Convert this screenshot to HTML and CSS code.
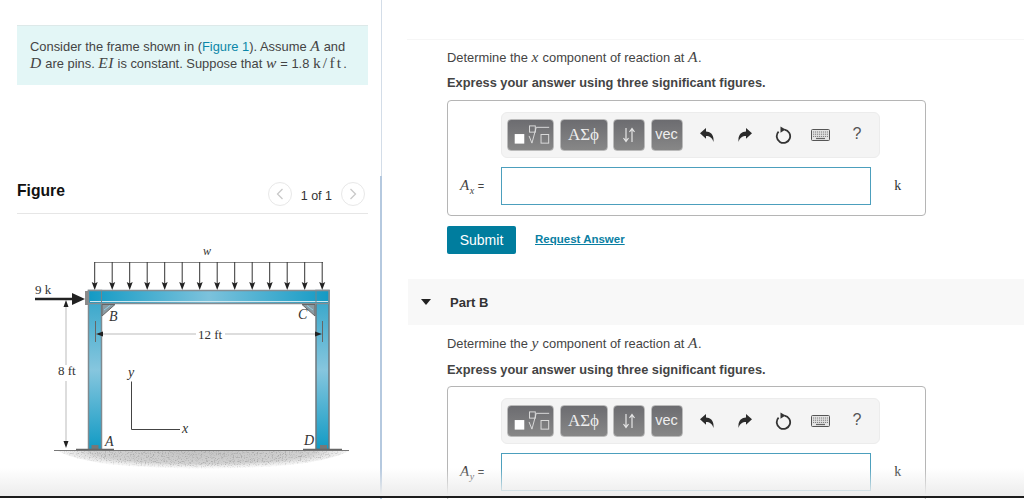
FILE: index.html
```html
<!DOCTYPE html>
<html lang="en">
<head>
<meta charset="utf-8">
<title>Frame reactions</title>
<link rel="stylesheet" href="styles.css">
</head>
<body>
<svg class="defs" width="0" height="0" aria-hidden="true">
  <defs>
    <symbol id="i-undo" viewBox="0 0 14 14"><path d="M0 5.300 6 0V3.400C10.500 3.600 14.400 6.600 13.400 14 12.400 9.800 9.600 8 6 8V10.800Z"/></symbol>
    <symbol id="i-redo" viewBox="0 0 14 14"><path d="M14 5.300 8 0V3.400C3.500 3.600-.4 6.600.6 14 1.600 9.800 4.400 8 8 8V10.800Z"/></symbol>
    <symbol id="i-reset" viewBox="0 0 17 18"><path d="M9.500 3.600A6.700 6.700 0 1 1 3.600 5.600" fill="none" stroke="#333" stroke-width="1.800"/><path d="M5.500 .5 10.500 3.600 5.500 6.800Z" fill="#333"/></symbol>
    <symbol id="i-keys" viewBox="0 0 19 12"><rect x=".5" y=".5" width="18" height="11" rx="1" fill="#e4e4e4" stroke="#555"/><path d="M2 3h15M2 5.200h15M2 7.400h15" stroke="#777" stroke-dasharray="1.200 .8"/><path d="M5 9.500h9" stroke="#666" stroke-width="1.200"/></symbol>
    <symbol id="i-root" viewBox="0 0 47 32"><rect x="7" y="15" width="10" height="10" fill="#fff"/><rect x="22.500" y="6.500" width="6" height="6.500" fill="none" stroke="#ddd"/><path d="M22 17l3 7.500L29.500 8H43" fill="none" stroke="#ddd"/><rect x="34.500" y="15.500" width="8" height="9" fill="none" stroke="#ddd"/></symbol>
    <symbol id="i-updown" viewBox="0 0 14 16"><path d="M4 1v13M1.500 11 4 14.500 6.500 11M10 15V2M7.500 5 10 1.500 12.500 5" fill="none" stroke="#e6e6e6" stroke-width="1.200"/></symbol>
  </defs>
</svg>

<div class="page">
  <aside class="left">
    <div class="intro">Consider the frame shown in (<a class="flink">Figure 1</a>). Assume <i class="m">A</i> and<br><i class="m">D</i> are pins. <i class="m">EI</i> is constant. Suppose that <i class="m">w</i> = 1.8 <span class="mr">k/ft</span>.</div>

    <div class="fig-head">
      <h2 class="fig-title">Figure</h2>
      <div class="pager">
        <span class="circle"><svg width="8" height="12" viewBox="0 0 8 12"><path d="M6.500 1 1.500 6l5 5" fill="none" stroke="#c9c9c9" stroke-width="1.300"/></svg></span>
        <span class="count">1 of 1</span>
        <span class="circle"><svg width="8" height="12" viewBox="0 0 8 12"><path d="M1.500 1l5 5-5 5" fill="none" stroke="#c9c9c9" stroke-width="1.300"/></svg></span>
      </div>
    </div>

    <svg class="frame" width="381" height="259" viewBox="0 240 381 259" role="img" aria-label="Frame diagram">
      <defs>
        <linearGradient id="gh" x1="0" x2="1" y1="0" y2="0"><stop offset="0" stop-color="#139ac4"/><stop offset=".5" stop-color="#7cc2dc"/><stop offset="1" stop-color="#139ac4"/></linearGradient>
        <linearGradient id="gv" x1="0" x2="0" y1="0" y2="1"><stop offset="0" stop-color="#2fa3c8"/><stop offset=".5" stop-color="#86c6de"/><stop offset="1" stop-color="#109ac4"/></linearGradient>
        <radialGradient id="gs" cx=".5" cy="0" r="1" gradientTransform="translate(.5 0) scale(.55 1) translate(-.5 0)"><stop offset="0" stop-color="#c4c4c4"/><stop offset=".7" stop-color="#d2d2d2"/><stop offset="1" stop-color="#e8e8e8" stop-opacity="0"/></radialGradient>
        <filter id="speck" x="0" y="0" width="100%" height="100%">
          <feTurbulence type="fractalNoise" baseFrequency=".75" numOctaves="2" seed="4" result="n"/>
          <feColorMatrix in="n" type="matrix" values="0 0 0 0 .4  0 0 0 0 .4  0 0 0 0 .4  3.500 0 0 0 -1.700" result="d"/>
          <feComposite in="d" in2="SourceGraphic" operator="in" result="c"/>
          <feMerge><feMergeNode in="SourceGraphic"/><feMergeNode in="c"/></feMerge>
        </filter>
      </defs>
      <path d="M58 451H349C330 461 285 469 205 469 125 469 78 462 58 451Z" fill="url(#gs)" filter="url(#speck)"/>
      <path d="M54 450.500H349" stroke="#777"/>

      <path d="M94.500 262.500H323" stroke="#888"/>
      <path d="M94.700 262V284M112.200 262V284M129.700 262V284M147.200 262V284M164.700 262V284M182.200 262V284M199.700 262V284M217.200 262V284M234.700 262V284M252.200 262V284M269.700 262V284M287.200 262V284M304.700 262V284M322.200 262V284" fill="none" stroke="#333"/>
      <path fill="#222" d="M94.700 290l-3-8 3 1.500 3-1.500zm17.500 0l-3-8 3 1.500 3-1.500zm17.500 0l-3-8 3 1.500 3-1.500zm17.500 0l-3-8 3 1.500 3-1.500zm17.500 0l-3-8 3 1.500 3-1.500zm17.500 0l-3-8 3 1.500 3-1.500zm17.500 0l-3-8 3 1.500 3-1.500zm17.500 0l-3-8 3 1.500 3-1.500zm17.500 0l-3-8 3 1.500 3-1.500zm17.500 0l-3-8 3 1.500 3-1.500zm17.500 0l-3-8 3 1.500 3-1.500zm17.500 0l-3-8 3 1.500 3-1.500zm17.500 0l-3-8 3 1.500 3-1.500zm17.500 0l-3-8 3 1.500 3-1.500z"/>

      <rect x="88.500" y="290.500" width="13" height="159" fill="url(#gv)" stroke="#7f8a90" stroke-width="1.500"/>
      <rect x="316" y="290.500" width="13" height="159" fill="url(#gv)" stroke="#6d777c" stroke-width="1.500"/>
      <rect x="88.500" y="290.500" width="240.500" height="13" fill="url(#gh)" stroke="#858d92" stroke-width="1.500"/>
      <path d="M90 301.500H328" stroke="#cfe8f0"/>
      <path d="M101.500 291V303M316 291V303" stroke="#76848b"/>
      <rect x="91.500" y="445" width="7" height="4.500" fill="#777"/>
      <rect x="320" y="445" width="7" height="4.500" fill="#777"/>
      <path d="M76 449.500H114M303 449.500H342" stroke="#666" stroke-width="1.500"/>
      <path d="M102 304.500H115L102 316Z" fill="#8a9aa2" stroke="#666"/>
      <path d="M315 304.500H302L315 316Z" fill="#8a9aa2" stroke="#666"/>
      <path d="M104 310 110 305.500M313 310 307 305.500" stroke="#8fd0e6"/>

      <rect x="85" y="291" width="3" height="14" fill="#8b8b8b"/>
      <path d="M35 299H74" stroke="#222" stroke-width="2.500"/>
      <path d="M72 293 85 299 72 305Z" fill="#222"/>

      <path d="M66 304V365M66 381V445" stroke="#bbb"/>
      <path d="M63.500 307 66 300 68.500 307ZM63.500 441 66 448 68.500 441Z" fill="#222"/>
      <path d="M97 334H196M225 334H320" stroke="#bbb"/>
      <path d="M95.500 321V342M322.500 321V342" stroke="#666"/>
      <path d="M103 331.500 96 334 103 336.500ZM315 331.500 322 334 315 336.500Z" fill="#222"/>
      <path d="M131.500 381.500V429.500H180" fill="none" stroke="#444"/>

      <text class="t" x="35" y="294">9 k</text>
      <text class="t" x="58" y="375">8 ft</text>
      <text class="t" x="198" y="339">12 ft</text>
      <text class="ti sm" x="203" y="255">w</text>
      <text class="ti" x="109" y="321">B</text>
      <text class="ti" x="298" y="319">C</text>
      <text class="ti" x="105" y="446">A</text>
      <text class="ti" x="304" y="445">D</text>
      <text class="ti" x="128" y="377">y</text>
      <text class="ti" x="182" y="433">x</text>
    </svg>
  </aside>

  <main class="right">
    <section class="part first">
      <p class="q">Determine the <i class="m">x</i> component of reaction at <i class="m">A</i>.</p>
      <p class="hint">Express your answer using three significant figures.</p>
      <div class="answer">
        <div class="toolbar">
          <button class="tb w47"><svg width="47" height="32"><use href="#i-root"/></svg></button>
          <button class="tb w48 greek">ΑΣϕ</button>
          <button class="tb w32"><svg width="14" height="16"><use href="#i-updown"/></svg></button>
          <button class="tb w32 vec">vec</button>
          <span class="tools">
            <svg class="ic" width="14" height="14"><use href="#i-undo"/></svg>
            <svg class="ic" width="14" height="14"><use href="#i-redo"/></svg>
            <svg class="ic" width="17" height="18"><use href="#i-reset"/></svg>
            <svg class="ic" width="19" height="12"><use href="#i-keys"/></svg>
            <span class="help">?</span>
          </span>
        </div>
        <div class="row">
          <span class="lab"><i class="m">A<sub>x</sub></i> =</span>
          <span class="input"></span>
          <span class="unit">k</span>
        </div>
      </div>
      <div class="actions">
        <button class="submit">Submit</button>
        <a class="req">Request Answer</a>
      </div>
    </section>

    <div class="part-head"><span class="caret"></span><span class="part-name">Part B</span></div>

    <section class="part second">
      <p class="q">Determine the <i class="m">y</i> component of reaction at <i class="m">A</i>.</p>
      <p class="hint">Express your answer using three significant figures.</p>
      <div class="answer">
        <div class="toolbar">
          <button class="tb w47"><svg width="47" height="32"><use href="#i-root"/></svg></button>
          <button class="tb w48 greek">ΑΣϕ</button>
          <button class="tb w32"><svg width="14" height="16"><use href="#i-updown"/></svg></button>
          <button class="tb w32 vec">vec</button>
          <span class="tools">
            <svg class="ic" width="14" height="14"><use href="#i-undo"/></svg>
            <svg class="ic" width="14" height="14"><use href="#i-redo"/></svg>
            <svg class="ic" width="17" height="18"><use href="#i-reset"/></svg>
            <svg class="ic" width="19" height="12"><use href="#i-keys"/></svg>
            <span class="help">?</span>
          </span>
        </div>
        <div class="row">
          <span class="lab"><i class="m">A<sub>y</sub></i> =</span>
          <span class="input"></span>
          <span class="unit">k</span>
        </div>
      </div>
    </section>
  </main>
</div>
<div class="shade"></div>
</body>
</html>
```

FILE: styles.css
```css
* { box-sizing: border-box; }
html, body { margin: 0; height: 499px; overflow: hidden; background: #fff; }
body { font-family: "Liberation Sans", Arial, sans-serif; color: #333; position: relative; }
.defs { position: absolute; }
.page { display: flex; height: 499px; overflow: hidden; }

.left { width: 382px; flex: none; padding: 25px 13px 0 17px; border-right: 1px solid #d3dde8; position: relative; }
.left::after { content: ""; position: absolute; right: -1px; top: 176px; bottom: 0; width: 2px; background: #b5c9df; }
.intro { height: 60px; padding: 12px 0 0 13px; background: #e3f6f6; border-top: 1px solid #dde9e9; font-size: 12.900px; line-height: 17px; color: #444; white-space: nowrap; }
.flink { color: #0a86a8; }
.m { font-family: "Liberation Serif", serif; font-style: italic; font-size: 15.500px; line-height: 0; letter-spacing: .5px; }
.mr { font-family: "Liberation Serif", serif; font-size: 15.500px; line-height: 0; letter-spacing: 2.200px; }
.fig-head { display: flex; justify-content: space-between; align-items: flex-start; height: 38px; margin-top: 91px; padding-right: 3px; border-bottom: 1px solid #e6e6e6; }
.fig-title { margin: 0; font-size: 15.700px; line-height: 30px; font-weight: 700; color: #111; }
.pager { display: flex; align-items: center; gap: 9px; margin-top: 6px; font-size: 12.500px; color: #333; }
.circle { width: 24px; height: 24px; border: 1px solid #e8e8e8; border-radius: 50%; display: flex; align-items: center; justify-content: center; }
.count { padding-top: 4px; }
.frame { display: block; margin: 26px 0 0 -17px; }
.t { font: 13px "Liberation Serif", serif; fill: #333; }
.ti { font: italic 14px "Liberation Serif", serif; fill: #333; }
.ti.sm { font-size: 12px; }

.right { flex: 1; min-width: 0; padding-top: 39px; }
.part { padding: 0 98px 0 65px; }
.first { border-top: 1px solid #f6f6f6; margin-left: 25px; padding-left: 40px; }
.q { margin: 0; font-size: 12.900px; line-height: 17px; color: #444; padding-top: 9px; }
.hint { margin: 8px 0 0; font-size: 12.800px; line-height: 17px; font-weight: 700; color: #444; }
.answer { margin-top: 9px; height: 116px; border: 1px solid #b5b5b5; border-radius: 4px; padding: 11px 45px 0 53px; }
.second .q { padding-top: 10px; }
.second .hint { margin-top: 9px; }
.second .answer { margin-top: 8px; }
.toolbar { display: flex; align-items: center; gap: 5.500px; width: 379px; height: 46px; padding: 0 5px; background: #f4f4f4; border: 1px solid #ececec; border-radius: 6px; }
.tb { height: 32px; padding: 0; border: 1px solid #bbb; border-radius: 4px; background: linear-gradient(#6c6c70, #878787); color: #eee; display: flex; align-items: center; justify-content: center; }
.w47 { width: 47px; }
.w48 { width: 48px; }
.w32 { width: 32px; }
.greek { font: 17px "Liberation Serif", serif; }
.vec { font: 14.500px "Liberation Sans", sans-serif; padding-bottom: 3px; }
.tools { display: flex; align-items: center; margin-left: 12px; }
.ic { fill: #2b2b2b; flex: none; }
.ic:nth-child(1) { margin-right: 23.500px; }
.ic:nth-child(2) { margin-right: 23px; }
.ic:nth-child(3) { margin-right: 19px; }
.ic:nth-child(4) { margin-right: 23px; }
.help { font-size: 16px; line-height: 16px; padding-bottom: 2px; color: #555; }
.row { display: flex; align-items: center; margin-top: 9px; margin-left: -53px; margin-right: -45px; }
.lab { width: 53px; padding-left: 12px; font-size: 11px; color: #444; white-space: nowrap; }
.lab .m { letter-spacing: .5px; font-size: 15px; }
.lab sub { font-size: 10px; line-height: 0; }
.input { width: 370px; height: 38px; background: #fff; border: 1px solid #4c9fbd; flex: none; }
.unit { width: 55px; text-align: center; font: 14px "Liberation Serif", serif; color: #333; }

.actions { display: flex; align-items: center; gap: 19px; margin-top: 10px; }
.submit { width: 69px; height: 28px; padding: 0; border: 0; border-radius: 2px; background: #007d9e; color: #fff; font: 14px "Liberation Sans", sans-serif; }
.req { font-size: 11.500px; font-weight: 700; color: #0a7fa3; text-decoration: underline; position: relative; top: -1px; }

.part-head { display: flex; align-items: center; height: 46px; margin: 25px 0 0 26px; padding-left: 13px; background: #f8f8f8; }
.caret { width: 0; height: 0; border-left: 5px solid transparent; border-right: 5px solid transparent; border-top: 6px solid #222; }
.part-name { margin-left: 19px; font-size: 13px; font-weight: 700; color: #333; }

.shade { position: absolute; left: 0; right: 0; bottom: 1px; height: 30px; background: linear-gradient(rgba(235,235,235,0), #ededed 96%); border-bottom: 2px solid #1c1c1c; pointer-events: none; }
```
